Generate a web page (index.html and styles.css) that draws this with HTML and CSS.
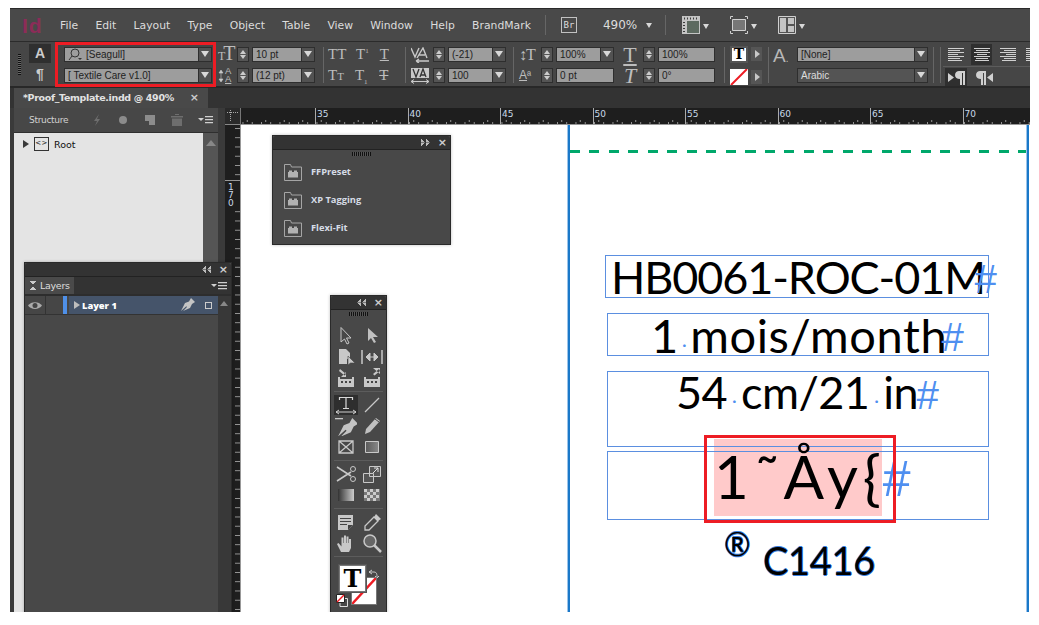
FILE: index.html
```html
<!DOCTYPE html>
<html lang="en">
<head>
<meta charset="utf-8">
<title>InDesign</title>
<link rel="stylesheet" href="styles.css">
</head>
<body>
<div class="app">
  <header class="menubar">
    <span class="logo">Id</span>
    <nav class="menu"><span>File</span><span>Edit</span><span>Layout</span><span>Type</span><span>Object</span><span>Table</span><span>View</span><span>Window</span><span>Help</span><span>BrandMark</span></nav>
    <i class="vsep first"></i>
    <span class="br">Br</span>
    <span class="zoomval">490%</span><i class="tri w z"></i>
    <i class="vsep second"></i>
    <svg class="mi" width="18" height="18" viewBox="0 0 18 18"><path fill="#c4c4c4" d="M0 0h18v18H0z"/><path fill="#5d6a60" d="M5 5h12v12H5z"/><path fill="#3c3c3c" d="M2 1.500h1v2H2zM5 1.500h1v2H5zM8 1.500h1v2H8zM11 1.500h1v2h-1zM14 1.500h1v2h-1zM1 6h2v1H1zM1 9h2v1H1zM1 12h2v1H1zM1 15h2v1H1z"/></svg><i class="tri w m"></i>
    <svg class="mi g1" width="18" height="18" viewBox="0 0 18 18"><path fill="none" stroke="#d0d0d0" d="M.5 3V.5H3M15 .5h2.500V3M.5 15v2.500H3M15 17.500h2.500V15"/><path fill="#777" stroke="#d0d0d0" d="M2.500 3.500h13v11h-13z"/></svg><i class="tri w m"></i>
    <svg class="mi g2" width="18" height="18" viewBox="0 0 18 18"><path fill="#555" stroke="#d0d0d0" d="M.5.500h17v17H.5z"/><path fill="#c4c4c4" d="M2 2h6v14H2zM10 2h6v6h-6zM10 10h6v6h-6z"/></svg><i class="tri w m"></i>
  </header>

  <section class="control">
    <div class="grip"></div>
    <div class="modes"><b class="mode on">A</b><b class="mode">¶</b></div>
    <div class="fontbox">
      <div class="combo wide"><span class="val"><svg class="search" width="14" height="13" viewBox="0 0 14 13"><circle cx="7" cy="5" r="4" fill="none" stroke="#333"/><path d="M4 8 1 12" stroke="#333" fill="none"/><path d="M10 10h4l-2 2z" fill="#333"/></svg>[Seagull]</span><i class="dd"></i></div>
      <div class="combo wide"><span class="val">[ Textile Care v1.0]</span><i class="dd"></i></div>
    </div>
    <div class="grp size">
      <div class="row"><span class="gl w17 szT"><small>T</small>T</span><i class="spin"></i><div class="combo c63"><span class="val">10 pt</span><i class="dd"></i></div></div>
      <div class="row"><span class="gl w17 stackwrap"><svg width="6" height="14" viewBox="0 0 6 14"><path d="M3 3v8M3 1 1 4h4zM3 13 1 10h4z" fill="#c9c9c9" stroke="#c9c9c9" stroke-width=".6"/></svg><span class="stack">A<u>A</u></span></span><i class="spin"></i><div class="combo c63"><span class="val">(12 pt)</span><i class="dd"></i></div></div>
    </div>
    <i class="sep s1"></i>
    <div class="grp case">
      <div class="row"><span class="gl cs">TT</span><span class="gl cs">T<sup>1</sup></span><span class="gl cs"><u>T</u></span></div>
      <div class="row"><span class="gl cs">T<small>T</small></span><span class="gl cs">T<sub>1</sub></span><span class="gl cs"><s>T</s></span></div>
    </div>
    <i class="sep s2"></i>
    <div class="grp kern">
      <div class="row"><span class="gk"><svg width="18" height="16" viewBox="0 0 18 16"><path fill="none" stroke="#c9c9c9" stroke-width="1.400" d="M0 1l4 9 4-9M6 11 12 1l4 10M8 8h6M5 14h13M5 14l3-2M5 14l3 2"/></svg></span><i class="spin"></i><div class="combo c58"><span class="val">(-21)</span><i class="dd"></i></div></div>
      <div class="row"><span class="gk"><svg width="18" height="16" viewBox="0 0 18 16"><path fill="#c9c9c9" d="M0 0h18v10H0z"/><path fill="none" stroke="#333" stroke-width="1.300" d="M2 1l3 8 3-8M9 9l3-8 3 8M10 7h4"/><path fill="none" stroke="#c9c9c9" d="M0 13.500h18M0 13.500l3-2M0 13.500l3 2M18 13.500l-3-2M18 13.500l-3 2"/></svg></span><i class="spin"></i><div class="combo c58"><span class="val">100</span><i class="dd"></i></div></div>
    </div>
    <i class="sep s3"></i>
    <div class="grp scale">
      <div class="row"><span class="gl w17 big">↕T</span><i class="spin"></i><div class="combo c58"><span class="val">100%</span><i class="dd"></i></div></div>
      <div class="row"><span class="gl w17 base"><u>A</u><small>ª</small></span><i class="spin"></i><div class="combo c58"><span class="val full">0 pt</span></div></div>
    </div>
    <div class="grp scale2">
      <div class="row"><span class="gl w16 bigT"><u>T</u></span><i class="spin"></i><div class="combo c57"><span class="val full">100%</span></div></div>
      <div class="row"><span class="gl w16 bigT it">T</span><i class="spin"></i><div class="combo c57"><span class="val full">0°</span></div></div>
    </div>
    <i class="sep s4"></i>
    <div class="grp fill">
      <div class="row"><span class="swT">T</span><i class="arrowbox"></i></div>
      <div class="row"><svg class="swN" width="18" height="16" viewBox="0 0 18 16"><path fill="#fff" d="M0 0h18v16H0z"/><path stroke="#ed1c24" stroke-width="2" d="M1 16 17 0"/></svg><i class="arrowbox"></i></div>
    </div>
    <i class="sep s5"></i>
    <span class="capA">A<small>.</small></span>
    <div class="grp lang">
      <div class="combo c131"><span class="val">[None]</span><i class="dd"></i></div>
      <div class="combo c131"><span class="val dark">Arabic</span><i class="dd"></i></div>
    </div>
    <i class="sep s6"></i><i class="sep s7"></i>
    <div class="aligns">
      <div class="arow">
        <span class="al"><svg width="16" height="14" viewBox="0 0 16 14"><path fill="#d0d0d0" d="M0 0h16v1H0zM0 2h12v1H0zM0 4h16v1H0zM0 6h10v1H0zM0 8h16v1H0zM0 10h12v1H0zM0 12h14v1H0z"/></svg></span>
        <span class="al on"><svg width="16" height="14" viewBox="0 0 16 14"><path fill="#d0d0d0" d="M0 0h16v1H0zM2 2h12v1H2zM0 4h16v1H0zM3 6h10v1H3zM0 8h16v1H0zM2 10h12v1H2zM1 12h14v1H1z"/></svg></span>
        <span class="al"><svg width="16" height="14" viewBox="0 0 16 14"><path fill="#d0d0d0" d="M0 0h16v1H0zM4 2h12v1H4zM0 4h16v1H0zM6 6h10v1H6zM0 8h16v1H0zM4 10h12v1H4zM2 12h14v1H2z"/></svg></span>
        <span class="al"><svg width="16" height="14" viewBox="0 0 16 14"><path fill="#d0d0d0" d="M0 0h16v1H0zM0 2h16v1H0zM0 4h16v1H0zM0 6h16v1H0zM0 8h16v1H0zM0 10h16v1H0zM0 12h8v1H0z"/></svg></span>
      </div>
      <div class="arow two">
        <span class="para on"><svg width="17" height="15" viewBox="0 0 17 15"><use href="#pil"/><path d="M0 3l6 4.500-6 4.500z" fill="#d0d0d0"/></svg></span>
        <span class="para"><svg width="17" height="15" viewBox="0 0 17 15"><path fill="#d0d0d0" d="M4 1h6v14H8V3H7v12H5V9C2 9 0 7.500 0 5s2-4 4-4zM17 3l-6 4.500 6 4.500z"/></svg></span>
      </div>
    </div>
  </section>

  <div class="tabbar"><div class="tab"><span>*Proof_Template.indd @ 490%</span><b>×</b></div></div>

  <div class="work">
    <aside class="side">
      <div class="sthead">
        <span class="stname">Structure</span>
        <svg width="118" height="14" viewBox="0 0 118 14"><path d="M0 1-5 8h3l-2 5 5-7h-3z" fill="#6e6e6e" transform="translate(1)"/><circle cx="25" cy="7" r="4" fill="#8c8c8c"/><path d="M47 2h10v10h-6V8h-4z" fill="#8c8c8c"/><path d="M73 3h12v1.500H73zM77 1h4v1h-4zM74 5.500h10V13H74z" fill="#6e6e6e"/><path d="M100 5h6l-3 3zM107 3h8v1.300h-8zM107 6h8v1.300h-8zM107 9h8v1.300h-8z" fill="#d0d0d0"/></svg>
      </div>
      <div class="stbody">
        <div class="tree">
          <div class="rootrow"><i class="tr"></i><span class="tag">&lt;&gt;</span><span>Root</span></div>
        </div>
        <div class="scroll"><i class="up"></i></div>
      </div>
    </aside>
    <div class="docarea">
      <div class="hrow">
        <div class="corner"></div>
        <div class="hruler"><span class="lead"></span><span>35</span><span>40</span><span>45</span><span>50</span><span>55</span><span>60</span><span>65</span><span>70</span></div>
      </div>
      <div class="vrow">
        <div class="vruler"><span>1<br>7<br>0</span></div>
        <div class="canvas">
          <i class="margin ml"></i><i class="margin mr"></i><i class="dash"></i>
          <i class="pink"></i>
          <div class="frame f1"><span>HB0061-ROC-01M</span><em>#</em></div>
          <div class="frame f2"><span>1<q>·</q>mois/month</span><em>#</em></div>
          <div class="frame f3"><span>54<q>·</q>cm/21<q>·</q>in</span><em>#</em></div>
          <div class="frame f4"><span>1 ˜ Å y {</span><em>#</em></div>
          <i class="redbox"></i>
          <span class="reg">®</span><span class="code">C1416</span>
        </div>
      </div>
    </div>

    <div class="float ff">
      <div class="fhead"><i class="collapse r"></i><b class="x">×</b></div>
      <div class="mini"></div>
      <ul class="libs">
        <li><svg width="18" height="17" viewBox="0 0 18 17"><use href="#folder"/></svg>FFPreset</li>
        <li><svg width="18" height="17" viewBox="0 0 18 17"><use href="#folder"/></svg>XP Tagging</li>
        <li><svg width="18" height="17" viewBox="0 0 18 17"><use href="#folder"/></svg>Flexi-Fit</li>
      </ul>
    </div>

    <div class="float layers">
      <div class="fhead"><i class="collapse"></i><b class="x">×</b></div>
      <div class="ltabs"><div class="ltab"><span class="updown"></span>Layers</div><svg class="lmenu" width="16" height="8" viewBox="0 0 16 8"><path d="M0 2h6L3 5zM7 0h9v1.300H7zM7 3h9v1.300H7zM7 6h9v1.300H7z" fill="#cfcfcf"/></svg></div>
      <div class="lbody">
        <div class="lmain">
          <div class="lrow">
            <span class="eye"><svg width="14" height="9" viewBox="0 0 14 9"><path d="M0 4.500C3 0 11 0 14 4.500 11 9 3 9 0 4.500z" fill="#aaa"/><circle cx="7" cy="4.500" r="2.500" fill="#444"/></svg></span>
            <span class="lock"></span>
            <i class="lcolor"></i>
            <div class="lname"><i class="tr light"></i><b>Layer 1</b>
              <svg class="lpen" width="14" height="14" viewBox="0 0 14 14"><use href="#pen"/></svg><i class="lsq"></i></div>
          </div>
        </div>
        <div class="lscroll"><i class="up"></i></div>
      </div>
    </div>

    <div class="float tools">
      <div class="fhead"><i class="collapse"></i><b class="x">×</b></div>
      <div class="mini"></div>
      <div class="tgrid">
        <svg viewBox="0 0 22 20"><path d="M6 1.500V16l3.500-3 2.500 5 2-1-2.500-5H16z" fill="none" stroke="#c8c8c8"/></svg>
        <svg viewBox="0 0 22 20"><path d="M7 2v13l3-3 3 5 2-1-3-5h5z" fill="#c0c0c0"/></svg>
        <svg viewBox="0 0 22 20"><path d="M4 2h7l4 4v6l-3 0v5H4z" fill="#c8c8c8"/><path d="M13 9v9l2.500-2H20z" fill="#c8c8c8" stroke="#444" stroke-width=".6"/></svg>
        <svg viewBox="0 0 22 20"><path d="M1 3v14M21 3v14" stroke="#c8c8c8" stroke-width="1.500"/><path d="M5 10h12M5 10l4-4v8zM17 10l-4-4v8z" fill="#c8c8c8" stroke="#c8c8c8"/></svg>
      </div>
      <div class="tgrid">
        <svg viewBox="0 0 22 20"><use href="#coll"/><path d="M5 1l6 5-1.500 1.500L4 3zM11 9V4L6 9z" fill="#c8c8c8"/></svg>
        <svg viewBox="0 0 22 20"><use href="#coll"/><path d="M18 1l-6 5 1.500 1.500L19 3zM12 0h7v6z" fill="#c8c8c8"/></svg>
      </div>
      <hr class="tsep">
      <div class="tgrid">
        <div class="tact"><svg viewBox="0 0 22 20"><path d="M4.500 5V2.500h13V5M11 2.500V13M8 13.500h6" fill="none" stroke="#d8d8d8" stroke-width="1.200"/><path d="M1 17h20M1 17l3-2M1 17l3 2M21 17l-3-2M21 17l-3 2" fill="none" stroke="#d0d0d0"/></svg></div>
        <svg viewBox="0 0 22 20"><path d="M4 17 18 3" stroke="#c8c8c8" stroke-width="1.300"/></svg>
        <svg viewBox="0 0 22 20"><path d="M0 2h8v1.300H0z" fill="#c8c8c8"/><svg x="2" y="2" width="20" height="18" viewBox="0 0 14 14"><use href="#pen"/></svg></svg>
        <svg viewBox="0 0 22 20"><path d="M15 2l4 3-10 11-5 2 1-5z" fill="#c0c0c0"/><path d="M14 3l4 3" stroke="#444"/></svg>
        <svg viewBox="0 0 22 20"><path d="M4 4h14v12H4zM4 4l14 12M18 4 4 16" fill="none" stroke="#c8c8c8" stroke-width="1.300"/></svg>
        <svg viewBox="0 0 22 20"><defs><linearGradient id="gr"><stop offset="0" stop-color="#5a5a5a"/><stop offset="1" stop-color="#888"/></linearGradient></defs><path d="M4.500 4.500h13v11h-13z" fill="url(#gr)" stroke="#c8c8c8"/></svg>
      </div>
      <hr class="tsep">
      <div class="tgrid">
        <svg viewBox="0 0 22 20"><circle cx="18" cy="5" r="2.500" fill="none" stroke="#c8c8c8"/><circle cx="18" cy="15" r="2.500" fill="none" stroke="#c8c8c8"/><path d="M2 3l14 9M2 17 16 8" stroke="#c8c8c8" stroke-width="1.600"/></svg>
        <svg viewBox="0 0 22 20"><path d="M2.500 9.500h10v9h-10zM8.500 2.500h11v10h-11z" fill="#555" stroke="#c8c8c8"/><path d="M12 9l5-5M13 4h4v4" fill="none" stroke="#e0e0e0"/></svg>
        <svg viewBox="0 0 22 20"><defs><linearGradient id="gr2"><stop offset="0" stop-color="#333"/><stop offset="1" stop-color="#ccc"/></linearGradient></defs><path d="M3 4h16v12H3z" fill="url(#gr2)"/></svg>
        <svg viewBox="0 0 22 20"><path d="M3 4h16v12H3z" fill="#777"/><path d="M3 4h3v3H3zM9 4h3v3H9zM15 4h3v3h-3zM6 7h3v3H6zM12 7h3v3h-3zM3 10h3v3H3zM9 10h3v3H9zM15 10h3v3h-3zM6 13h3v3H6zM12 13h3v3h-3z" fill="#ccc"/></svg>
      </div>
      <hr class="tsep">
      <div class="tgrid">
        <svg viewBox="0 0 22 20"><path d="M3 3h15v10l-5 5H3z" fill="#c8c8c8"/><path d="M5 6h11v1H5zM5 9h11v1H5zM5 12h7v1H5z" fill="#444"/><path d="M13 18v-5h5z" fill="#444"/></svg>
        <svg viewBox="0 0 22 20"><path d="M13 5l4 4-9 9H4v-4z" fill="none" stroke="#c8c8c8" stroke-width="1.300"/><path d="M15 2l5 5-3 2-4-4z" fill="#c8c8c8"/></svg>
        <svg viewBox="0 0 22 20"><path d="M6 19 2 11l1.500-1 3 3.500V4.500h2V10h.5V2.500h2V10h.5V3.500h2V10h.5V6h2v9l-2 4z" fill="#c8c8c8"/></svg>
        <svg viewBox="0 0 22 20"><circle cx="9" cy="8" r="6" fill="#666" stroke="#c8c8c8" stroke-width="1.500"/><path d="M13 12l7 7" stroke="#c8c8c8" stroke-width="2.500"/></svg>
      </div>
      <hr class="tsep">
      <div class="swatches">
        <svg class="swapa" width="11" height="12" viewBox="0 0 11 12"><path d="M1 3h5c3 0 3 3 3 5M1 3l3-2M1 3l3 2M9 9l-2-2M9 9l2-2" fill="none" stroke="#c8c8c8"/></svg>
        <div class="swback"><svg width="24" height="26" viewBox="0 0 24 26"><path d="M0 26 24 0" stroke="#ed1c24" stroke-width="2.500"/></svg></div>
        <div class="swfront">T</div>
        <svg class="swmini" width="12" height="13" viewBox="0 0 12 13"><path d="M.5.500h8v8h-8z" fill="#fff" stroke="#222"/><path d="M1 8l7-7" stroke="#ed1c24" stroke-width="1.500"/><path d="M4 9v3.500h7.500V4.500H9" fill="none" stroke="#ddd"/></svg>
      </div>
    </div>
  </div>
</div>
<svg class="defs" width="0" height="0" aria-hidden="true">
  <symbol id="folder" viewBox="0 0 18 17"><path d="M.5 16.500V.5h6l1 2.500h10v13.500z" fill="none" stroke="#a5a5a5"/><path d="M4 13.500V8h1V6.500h3V8h2V6.500h3V8h1v5.500z" fill="#b2b2b2"/></symbol>
  <symbol id="pen" viewBox="0 0 14 14"><path d="M10 0l4 4-3 2-2 4-7 3-1 1 5-5-.7-.7L0 13l1-2 3-6 4-1.500z" fill="#c4c4c4"/></symbol>
  <symbol id="coll" viewBox="0 0 22 20"><path d="M3 9h2v2h12V9h2v10H3z" fill="#c8c8c8"/><path d="M6 13h2v2H6zM10 13h2v2h-2zM14 13h2v2h-2z" fill="#444"/></symbol>
  <symbol id="pil" viewBox="0 0 17 15"><path fill="#d0d0d0" d="M11 1h6v14h-2V3h-1v12h-2V9C9 9 7 7.500 7 5s2-4 4-4z"/></symbol>
</svg>
</body>
</html>
```
FILE: styles.css
```css
* { box-sizing: border-box; }
html, body { margin: 0; padding: 0; background: #fff; overflow: hidden; }
body { width: 1039px; height: 625px; font-family: "DejaVu Sans", sans-serif; }
i { display: block; font-style: normal; }

.app { position: relative; margin: 8px 0 0 10px; width: 1020px; height: 604px; overflow: hidden; background: #484848; border-top: 1px solid #2a2a2a; }

/* menu bar */
.menubar { display: flex; align-items: center; height: 33px; background: #494949; color: #dcdcdc; font-size: 10.800px; border-bottom: 1px solid #2b2b2b; }
.logo { width: 50px; padding-left: 12px; font: bold 21px/1 "Liberation Sans", sans-serif; color: #8c2c58; letter-spacing: 1px; }
.menu { display: flex; gap: 17.300px; }
.menu span { white-space: nowrap; }
.vsep { width: 1px; height: 20px; background: #666; }
.vsep.first { margin-left: 14px; }
.vsep.second { margin-left: 0; }
.br { width: 16px; height: 16px; margin-left: 15px; border: 1px solid #c2c2c2; font: 9px/14px "DejaVu Sans Mono", monospace; text-align: center; color: #ddd; }
.zoomval { margin-left: 26px; font-size: 12px; }
.tri { width: 0; height: 0; border-style: solid; border-color: #d8d8d8 transparent transparent; border-width: 5px 3.500px 0; }
.tri.z { margin-left: 9px; margin-right: 13px; }
.mi { margin-left: 16px; flex: none; }
.mi.g1 { margin-left: 21px; }
.mi.g2 { margin-left: 21px; }
.tri.m { margin-left: 3px; margin-top: 2px; }

/* control panel */
.control { display: flex; height: 46px; background: #464646; border-bottom: 2px solid #282828; position: relative; color: #c9c9c9; }
.grip { width: 3px; height: 21px; margin: 12px 8px 0 8px; background: repeating-linear-gradient(#111 0 1px, #666 1px 2px); }
.modes { width: 22px; display: flex; flex-direction: column; margin-top: 2px; }
.mode { height: 20px; font: bold 14px/19px "Liberation Sans", sans-serif; text-align: center; color: #ccc; margin-bottom: 2px; }
.mode.on { background: #2f2f2f; }
.fontbox { width: 161px; height: 45px; margin-left: 4px; border: 3px solid #ed1c24; padding: 2px 0 0 6px; display: flex; flex-direction: column; gap: 6px; background: #444; }
.combo { display: flex; height: 15px; border: 1px solid #2e2e2e; background: #9d9d9d; color: #222; font: 10px/13px "Liberation Sans", "DejaVu Sans", sans-serif; }
.combo.wide { width: 148px; }
.val { flex: 1; padding-left: 3px; white-space: nowrap; overflow: hidden; display: flex; align-items: center; }
.val.dark { background: #545454; color: #ddd; }
.search { margin-right: 4px; flex: none; }
.dd { width: 13px; flex: none; background: #525252; position: relative; border-left: 1px solid #2e2e2e; }
.dd::after { content: ""; position: absolute; left: 2px; top: 3px; border-style: solid; border-color: #d8d8d8 transparent transparent; border-width: 6px 4px 0; }
.spin { width: 12px; height: 15px; flex: none; background: #555; border: 1px solid #2e2e2e; position: relative; }
.spin::before, .spin::after { content: ""; position: absolute; left: 2px; border-style: solid; border-color: transparent; border-width: 4px 3px; }
.spin::before { top: -2px; border-bottom-color: #ccc; }
.spin::after { bottom: -2px; border-top-color: #ccc; }
.grp { display: flex; flex-direction: column; gap: 6px; margin-top: 5px; flex: none; }
.row { display: flex; align-items: center; height: 15px; }
.gl { font: 17px/15px "Liberation Serif", serif; color: #bdbdbd; white-space: nowrap; }
.gl small { font-size: 11px; }
.gl sup, .gl sub { font-size: 7px; line-height: 0; }
.w17 { width: 17px; margin-right: 2px; }
.w16 { width: 16px; margin-right: 5px; }
.size { width: 97px; margin-left: 2px; }
.size .spin { margin-right: 3px; }
.szT { font-size: 20px; letter-spacing: -2px; }
.szT small { font-size: 12px; }
.stackwrap { display: flex; align-items: center; gap: 1px; }
.stack { font: 9.500px/8px "Liberation Sans", sans-serif; display: flex; flex-direction: column; align-items: center; margin-top: -1px; }
.c63 { width: 63px; }
.c58 { width: 58px; }
.c57 { width: 57px; }
.c131 { width: 131px; }
.full { border: 0; }
.sep { width: 1px; height: 36px; margin-top: 5px; background: #666; flex: none; }
.s1 { margin-left: 8px; }
.case { margin-left: 4px; width: 72px; }
.cs { width: 17px; margin-right: 11px; font-size: 15px; text-align: center; }
.s2 { margin-left: 5px; }
.kern { margin-left: 5px; width: 95px; }
.gk { width: 18px; margin-right: 4px; height: 16px; flex: none; }
.kern .spin { margin-right: 3px; }
.s3 { margin-left: 7px; }
.scale { margin-left: 5px; width: 95px; }
.scale .w17 { margin-right: 5px; }
.scale .spin, .scale2 .spin { margin-right: 3px; }
.big { font-size: 16px; letter-spacing: -1px; }
.base { font: 12px/15px "Liberation Sans", sans-serif; }
.scale2 { margin-left: 8px; width: 93px; }
.bigT { font-size: 22px; text-align: center; }
.it { font-style: italic; }
.s4 { margin-left: 9px; }
.fill { margin-left: 5px; width: 32px; gap: 5px; margin-top: 3px; }
.fill .row { height: 18px; }
.swT { width: 18px; height: 17px; background: #fff; border: 2px solid #555; color: #000; font: bold 14px/13px "DejaVu Serif", serif; text-align: center; }
.arrowbox { width: 11px; height: 14px; margin-left: 3px; background: #555; position: relative; }
.arrowbox::after { content: ""; position: absolute; left: 4px; top: 3px; border-style: solid; border-color: transparent transparent transparent #c8c8c8; border-width: 4px 0 4px 5px; }
.s5 { margin-left: 6px; }
.capA { margin-left: 4px; width: 24px; font: 19px/24px "Liberation Sans", sans-serif; color: #b8b8b8; margin-top: 2px; flex: none; }
.capA small { font-size: 10px; }
.s6 { margin-left: 5px; }
.s7 { margin-left: 6px; }
.aligns { flex: 1; margin-left: 2px; overflow: hidden; }
.arow { display: flex; height: 24px; gap: 5px; padding-left: 2px; align-items: center; }
.arow.two { border-top: 1px solid #5c5c5c; height: 21px; gap: 6px; }
.al { width: 21px; height: 21px; flex: none; display: flex; align-items: center; justify-content: center; }
.al svg { flex: none; margin-top: 1px; }
.al.on { background: #2f2f2f; }
.para { width: 22px; height: 19px; display: flex; align-items: center; justify-content: center; }
.para.on { background: #2f2f2f; }

/* tabs */
.tabbar { height: 20px; background: #333; }
.tab { width: 194px; height: 20px; margin-left: 4px; background: #494949; display: flex; justify-content: space-between; padding: 0 9px 0 9px; color: #e2e2e2; font: bold 9.500px/20px "DejaVu Sans", sans-serif; white-space: nowrap; overflow: hidden; }
.tab span { letter-spacing: -.35px; }
.tab b { color: #ccc; font-size: 11px; }

/* workspace */
.work { display: flex; height: 504px; }
.side { width: 215px; flex: none; background: #3a3a3a; padding-left: 4px; }
.sthead { height: 25px; width: 204px; display: flex; align-items: center; justify-content: space-between; background: #474747; border-bottom: 1px solid #2f2f2f; padding: 0 5px 0 15px; }
.stname { font: 9px "DejaVu Sans", sans-serif; color: #d2d2d2; letter-spacing: -.3px; }
.sthead svg { margin-right: -3px; flex: none; overflow: visible; }
.stbody { display: flex; height: 479px; }
.tree { width: 189px; background: #e4e4e4; padding: 4px 0 0 9px; }
.rootrow { display: flex; align-items: center; font: 9.500px "DejaVu Sans", sans-serif; color: #111; gap: 5px; height: 14px; }
.tr { border-style: solid; border-color: transparent transparent transparent #3a3a3a; border-width: 4.500px 0 4.500px 6px; margin-right: 0; }
.tag { width: 15px; height: 14px; border: 1px solid #333; font-size: 7px; line-height: 11px; text-align: center; letter-spacing: .5px; }
.scroll { width: 15px; background: #555; position: relative; }
.up { position: absolute; left: 3px; top: 7px; border-style: solid; border-color: transparent transparent #888; border-width: 0 5px 6px; }

.docarea { flex: 1; display: flex; flex-direction: column; min-width: 0; }
.hrow { display: flex; height: 17px; flex: none; }
.corner { width: 16px; background: #2a2a2a; border-right: 1px solid #777; border-bottom: 1px solid #888; position: relative; background-image: repeating-linear-gradient(90deg,#aaa 0 1px,transparent 1px 2px), repeating-linear-gradient(#aaa 0 1px,transparent 1px 2px); background-size: 11px 1px, 1px 11px; background-position: 2px 4px, 5px 2px; background-repeat: no-repeat; }
.hruler { flex: 1; display: flex; color: #c9d9e8; font: 9px/12px "DejaVu Sans", sans-serif; border-bottom: 1px solid #999; overflow: hidden; background-color: #1e1e1e; background-repeat: repeat-x; background-size: 9.250px 2px, 18.500px 2px; background-image: linear-gradient(90deg,#999 1px,transparent 1px), linear-gradient(90deg,#999 1px,transparent 1px); background-position: 1.500px 14px, 5.750px 12px; }
.hruler span { width: 92.500px; flex: none; border-left: 1px solid #aaa; padding-left: 1px; background: transparent; }
.hruler .lead { width: 74px; border: 0; }
.vrow { flex: 1; display: flex; min-height: 0; }
.vruler { width: 16px; flex: none; background-color: #1e1e1e; border-right: 1px solid #999; background-image: linear-gradient(#999 1px,transparent 1px); background-size: 5px 9.250px; background-repeat: repeat-y; background-position: right 3px; padding-top: 55px; color: #c9d9e8; font: 9px/8px "DejaVu Sans", sans-serif; }
.vruler span { display: block; padding: 2px 0 0 3px; border-top: 1px solid #999; background: #1e1e1e; width: 15px; height: 30px; }
.canvas { flex: 1; position: relative; background: #fff; overflow: hidden; }

.margin { position: absolute; top: 0; bottom: 0; width: 3px; background: #1a78c8; border-left: 1px solid #9cc4ea; }
.ml { left: 326px; }
.mr { left: 785px; }
.dash { position: absolute; left: 329px; top: 25px; width: 456px; height: 3px; background: repeating-linear-gradient(90deg,#00a86b 0 10px,transparent 10px 19.500px); }
.pink { position: absolute; left: 473px; top: 314px; width: 168px; height: 77px; background: #ffcaca; }
.frame { position: absolute; border: 1px solid #5b8fe0; font-family: Lato, sans-serif; color: #000; white-space: nowrap; }
.frame span, .frame em { position: absolute; top: 0; }
.frame em { top: 2px; font-family: "Liberation Sans", sans-serif; font-style: italic; color: #4f8ff0; }
.frame q { quotes: none; color: #4f8ff0; font-size: 18px; vertical-align: 2px; margin: 0 5px; }
.f1 { left: 364px; top: 130px; width: 384px; height: 43px; font-size: 45px; line-height: 43px; }
.f1 span { left: 5px; letter-spacing: -1.100px; }
.f1 em { left: 368px; font-size: 40px; }
.f2 { left: 366px; top: 188px; width: 382px; height: 43px; font-size: 47px; line-height: 43px; }
.f2 span { left: 43px; letter-spacing: .600px; }
.f2 q { margin: 0 3px; }
.f2 em { left: 333px; font-size: 40px; }
.f3 { left: 366px; top: 246px; width: 382px; height: 76px; font-size: 45px; line-height: 41px; }
.f3 span { left: 68px; letter-spacing: -.600px; }
.f3 em { left: 308px; font-size: 40px; line-height: 43px; }
.f4 { left: 366px; top: 326px; width: 382px; height: 69px; font-size: 60px; line-height: 49px; }
.f4 span { left: 106px; word-spacing: -9px; }
.f4 em { left: 274px; top: 0; font-size: 50px; line-height: 55px; }
.redbox { position: absolute; left: 463px; top: 310px; width: 192px; height: 88px; border: 3px solid #ed1c24; }
.reg, .code { position: absolute; font-family: Lato, sans-serif; color: #000; text-shadow: .6px 0 #3a7fe0, -.6px 0 #3a7fe0, 0 .6px #3a7fe0, 0 -.6px #3a7fe0; }
.reg { left: 483px; top: 399px; font-size: 32px; line-height: 40px; }
.code { left: 522px; top: 413px; font-size: 38px; line-height: 44px; letter-spacing: -.300px; }

/* floating panels */
.float { position: absolute; background: #484848; border: 1px solid #2a2a2a; box-shadow: 0 0 3px rgba(0,0,0,.25); }
.fhead { height: 14px; background: #333; border-bottom: 1px solid #222; border-radius: 3px 3px 0 0; display: flex; justify-content: flex-end; align-items: center; padding-right: 3px; gap: 8px; }
.x { font: bold 11px/12px "DejaVu Sans", sans-serif; color: #cfcfcf; }
.collapse { width: 9px; height: 7px; background: linear-gradient(135deg,transparent 50%,#bbb 50%) 0 0/4px 3.500px no-repeat, linear-gradient(45deg,transparent 50%,#bbb 50%) 0 3.500px/4px 3.500px no-repeat, linear-gradient(135deg,transparent 50%,#bbb 50%) 5px 0/4px 3.500px no-repeat, linear-gradient(45deg,transparent 50%,#bbb 50%) 5px 3.500px/4px 3.500px no-repeat; }
.collapse.r { transform: scaleX(-1); }
.mini { width: 19px; height: 4px; margin: 2px auto 0; background: repeating-linear-gradient(90deg,#111 0 1px,#555 1px 2px); }
.ff { left: 262px; top: 126px; width: 179px; height: 110px; }
.libs { list-style: none; margin: 2px 0 0; padding: 0 0 0 11px; font: bold 9.300px/28px "Open Sans", sans-serif; color: #d6dce6; }
.libs li { display: flex; align-items: center; gap: 9px; height: 28px; }
.layers { left: 14px; top: 253px; width: 208px; height: 360px; }
.ltabs { height: 17px; background: #333; display: flex; justify-content: space-between; align-items: center; padding-right: 4px; }
.ltab { width: 49px; height: 17px; background: #4a4a4a; font: 9.500px/17px "DejaVu Sans", sans-serif; color: #ddd; padding-left: 15px; position: relative; letter-spacing: -.3px; }
.updown { position: absolute; left: 5px; top: 4px; width: 6px; height: 9px; background: linear-gradient(45deg,transparent 50%,#ccc 50%) 0 0/3px 4px no-repeat, linear-gradient(-45deg,transparent 50%,#ccc 50%) 3px 0/3px 4px no-repeat, linear-gradient(135deg,transparent 50%,#ccc 50%) 0 5px/3px 4px no-repeat, linear-gradient(-135deg,transparent 50%,#ccc 50%) 3px 5px/3px 4px no-repeat; }
.lbody { display: flex; height: 330px; border-top: 2px solid #2d2d2d; }
.lmain { flex: 1; min-width: 0; }
.lrow { display: flex; height: 19px; border-bottom: 1px solid #333; background: #464646; align-items: stretch; }
.eye { width: 20px; display: flex; align-items: center; justify-content: center; }
.lock { width: 18px; border-left: 1px solid #333; }
.lcolor { width: 4px; background: #4f90e8; }
.lname { flex: 1; margin-left: 2px; background: #45546a; display: flex; align-items: center; padding-left: 5px; color: #fff; font: bold 9.300px "Open Sans", sans-serif; white-space: nowrap; }
.tr.light { border-left-color: #bdbdbd; margin-right: 2px; }
.lpen { margin-left: auto; flex: none; }
.lsq { width: 7px; height: 7px; border: 1px solid #ccc; margin: 0 6px 0 10px; flex: none; }
.lscroll { width: 13px; flex: none; background: #383838; position: relative; }
.lscroll .up { left: 2px; top: 5px; border-width: 0 4px 5px; }
.tools { left: 320px; top: 286px; width: 57px; height: 330px; }
.tgrid { display: grid; grid-template-columns: 26px 26px; grid-auto-rows: 21px; padding-left: 2px; justify-items: center; align-items: center; }
.tgrid svg { width: 22px; height: 20px; display: block; }
.tools .mini { margin-bottom: 9px; }
.tsep { border: 0; height: 1px; margin: 3px 3px 2px; background: #5c5c5c; }
.tact { width: 24px; height: 20px; background: #2e2e2e; display: flex; align-items: center; justify-content: center; }
.swatches { position: relative; height: 50px; margin-top: 6px; }
.swfront { position: absolute; left: 8px; top: 2px; width: 27px; height: 27px; background: #fff; border: 1px solid #777; color: #000; font: bold 24px/25px "DejaVu Serif", serif; text-align: center; z-index: 1; box-shadow: 0 0 0 1px #555; }
.swback { position: absolute; left: 20px; top: 14px; width: 26px; height: 28px; background: #fff; border: 1px solid #777; }
.swback svg { display: block; }
.swapa { position: absolute; left: 37px; top: 6px; }
.swmini { position: absolute; left: 5px; top: 31px; }
.defs { position: absolute; }
```
